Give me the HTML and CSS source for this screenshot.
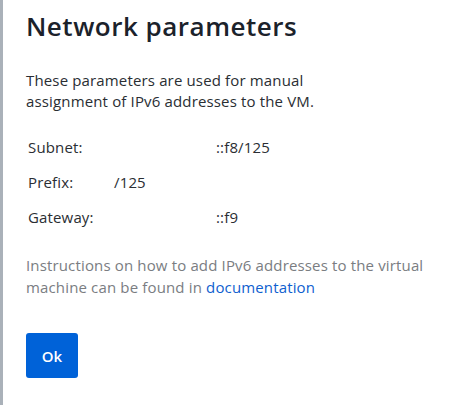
FILE: index.html
```html
<!DOCTYPE html>
<html lang="en">
<head>
<meta charset="utf-8">
<title>Network parameters</title>
<link rel="stylesheet" href="styles.css">
</head>
<body>
<div class="backdrop">
  <div class="modal">
    <h1 class="title">Network parameters</h1>
    <p class="intro">These parameters are used for manual assignment of IPv6 addresses to the VM.</p>
    <div class="params">
      <div class="row"><span class="label">Subnet:</span><span class="value wide">::f8/125</span></div>
      <div class="row"><span class="label">Prefix:</span><span class="value narrow">/125</span></div>
      <div class="row"><span class="label">Gateway:</span><span class="value wide">::f9</span></div>
    </div>
    <p class="note">Instructions on how to add IPv6 addresses to the virtual machine can be found in <a class="link" href="#">documentation</a></p>
    <button class="btn" type="button">Ok</button>
  </div>
</div>
</body>
</html>
```
FILE: styles.css
```css
html, body {
  margin: 0;
  padding: 0;
  background: #ffffff;
}
body {
  font-family: "Open Sans", "Noto Sans", sans-serif;
  width: 474px;
  height: 405px;
  overflow: hidden;
}
.backdrop {
  display: flex;
  height: 405px;
  background: #aab1b9;
  padding-left: 3px;
}
.modal {
  flex: 1;
  background: #ffffff;
  padding: 9px 23px 0 23px;
}
.title {
  margin: 0;
  font-size: 26px;
  font-weight: 600;
  letter-spacing: 0.5px;
  line-height: 34px;
  color: #1b222b;
}
.intro {
  margin: 27px 0 0 0;
  max-width: 340px;
  font-size: 15px;
  letter-spacing: 0.15px;
  line-height: 21px;
  color: #2a2e33;
}
.params {
  margin-top: 25px;
  display: flex;
  flex-direction: column;
  gap: 15px;
  padding-left: 2px;
}
.row {
  display: flex;
  font-size: 15px;
  letter-spacing: 0.15px;
  line-height: 20px;
  color: #2a2e33;
}
.label {
  width: 86px;
}
.value.wide {
  margin-left: 102px;
}
.note {
  margin: 27px 0 0 0;
  font-size: 15px;
  letter-spacing: 0.15px;
  line-height: 22px;
  color: #7a7d82;
}
.link {
  color: #0f5fcf;
  text-decoration: none;
}
.btn {
  margin-top: 35px;
  width: 52px;
  height: 45px;
  border: none;
  border-radius: 3px;
  background: #0062d8;
  color: #ffffff;
  font-family: "Open Sans", "Noto Sans", sans-serif;
  font-size: 15px;
  font-weight: 600;
  padding: 0;
}
```
